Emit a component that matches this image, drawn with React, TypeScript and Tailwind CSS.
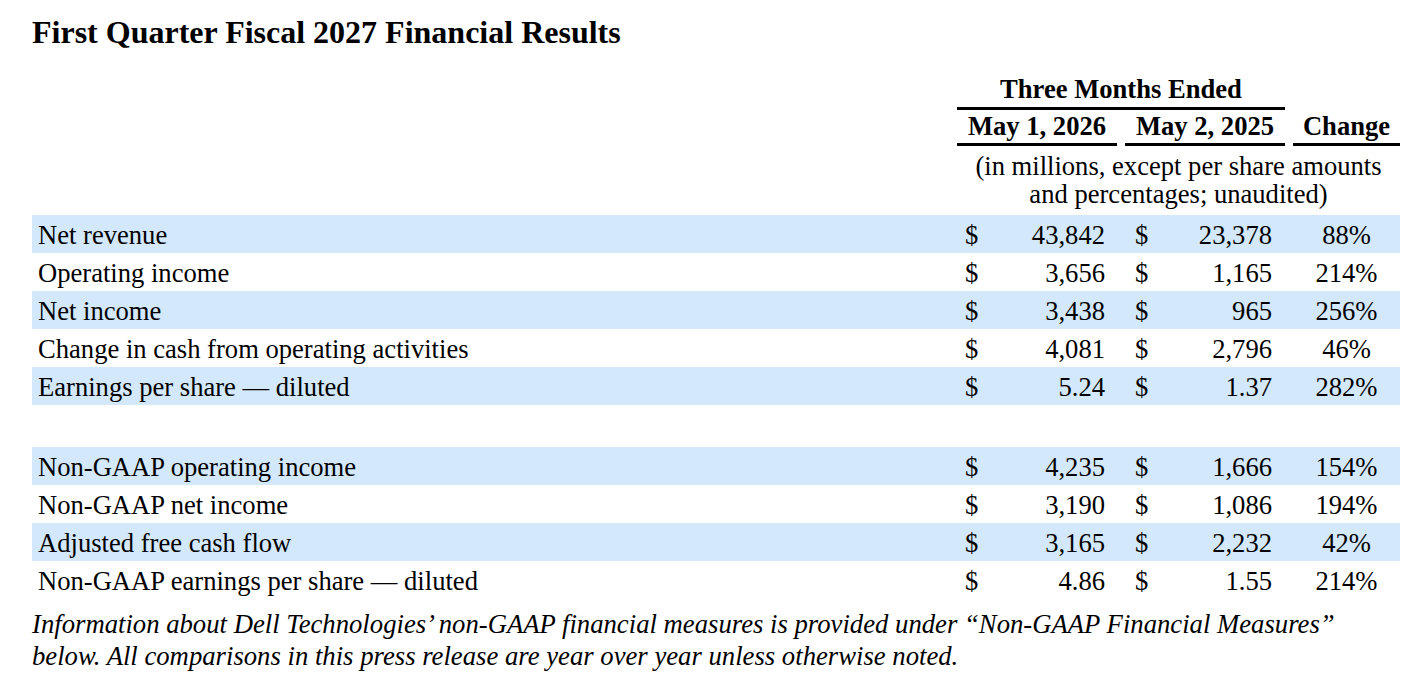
import React from 'react';

type Row = { label: string; a: string; b: string; change: string; shaded: boolean };

const gaapRows: Row[] = [
  { label: 'Net revenue', a: '43,842', b: '23,378', change: '88%', shaded: true },
  { label: 'Operating income', a: '3,656', b: '1,165', change: '214%', shaded: false },
  { label: 'Net income', a: '3,438', b: '965', change: '256%', shaded: true },
  { label: 'Change in cash from operating activities', a: '4,081', b: '2,796', change: '46%', shaded: false },
  { label: 'Earnings per share — diluted', a: '5.24', b: '1.37', change: '282%', shaded: true },
];

const nonGaapRows: Row[] = [
  { label: 'Non-GAAP operating income', a: '4,235', b: '1,666', change: '154%', shaded: true },
  { label: 'Non-GAAP net income', a: '3,190', b: '1,086', change: '194%', shaded: false },
  { label: 'Adjusted free cash flow', a: '3,165', b: '2,232', change: '42%', shaded: true },
  { label: 'Non-GAAP earnings per share — diluted', a: '4.86', b: '1.55', change: '214%', shaded: false },
];

const cols = 'grid grid-cols-[925px_160px_8px_160px_8px_107px]';

const DataRow: React.FC<Row> = ({ label, a, b, change, shaded }) => (
  <div className={`${cols} h-[38px] pt-[2px] leading-[36px] ${shaded ? 'bg-[#d3e8fa]' : ''}`}>
    <div className="pl-[6px] whitespace-nowrap">{label}</div>
    <div className="flex justify-between pl-[8px] pr-[12px]">
      <span>$</span>
      <span>{a}</span>
    </div>
    <div />
    <div className="flex justify-between pl-[10px] pr-[13px]">
      <span>$</span>
      <span>{b}</span>
    </div>
    <div />
    <div className="text-center">{change}</div>
  </div>
);

export default function App() {
  return (
    <div className="min-h-screen bg-white px-8 pt-[14px] text-[26.6px] text-black font-['Liberation_Serif','Times_New_Roman',serif]">
      <h1 className="text-[32px] font-bold leading-[36px]">First Quarter Fiscal 2027 Financial Results</h1>

      <div className="mt-[24px] w-[1368px]">
        <div className={`${cols} font-bold`}>
          <div />
          <div className="col-span-3 border-b-[3px] border-black pb-[3px] text-center leading-[30px]">
            Three Months Ended
          </div>
          <div />
          <div />

          <div />
          <div className="border-b-[3px] border-black pb-[2px] pt-[1px] text-center leading-[30px]">May 1, 2026</div>
          <div />
          <div className="border-b-[3px] border-black pb-[2px] pt-[1px] text-center leading-[30px]">May 2, 2025</div>
          <div />
          <div className="border-b-[3px] border-black pb-[2px] pt-[1px] text-center leading-[30px]">Change</div>
        </div>

        <div className={`${cols} mt-[6px] pb-[7px]`}>
          <div />
          <div className="col-span-5 text-center leading-[28px]">
            (in millions, except per share amounts
            <br />
            and percentages; unaudited)
          </div>
        </div>

        {gaapRows.map((r) => (
          <DataRow key={r.label} {...r} />
        ))}
        <div className="h-[42px]" />
        {nonGaapRows.map((r) => (
          <DataRow key={r.label} {...r} />
        ))}

        <p className="mt-[9px] max-w-[1350px] text-[26.7px] italic leading-[32px]">
          Information about Dell Technologies’ non-GAAP financial measures is provided under “Non-GAAP Financial
          Measures” below. All comparisons in this press release are year over year unless otherwise noted.
        </p>
      </div>
    </div>
  );
}
